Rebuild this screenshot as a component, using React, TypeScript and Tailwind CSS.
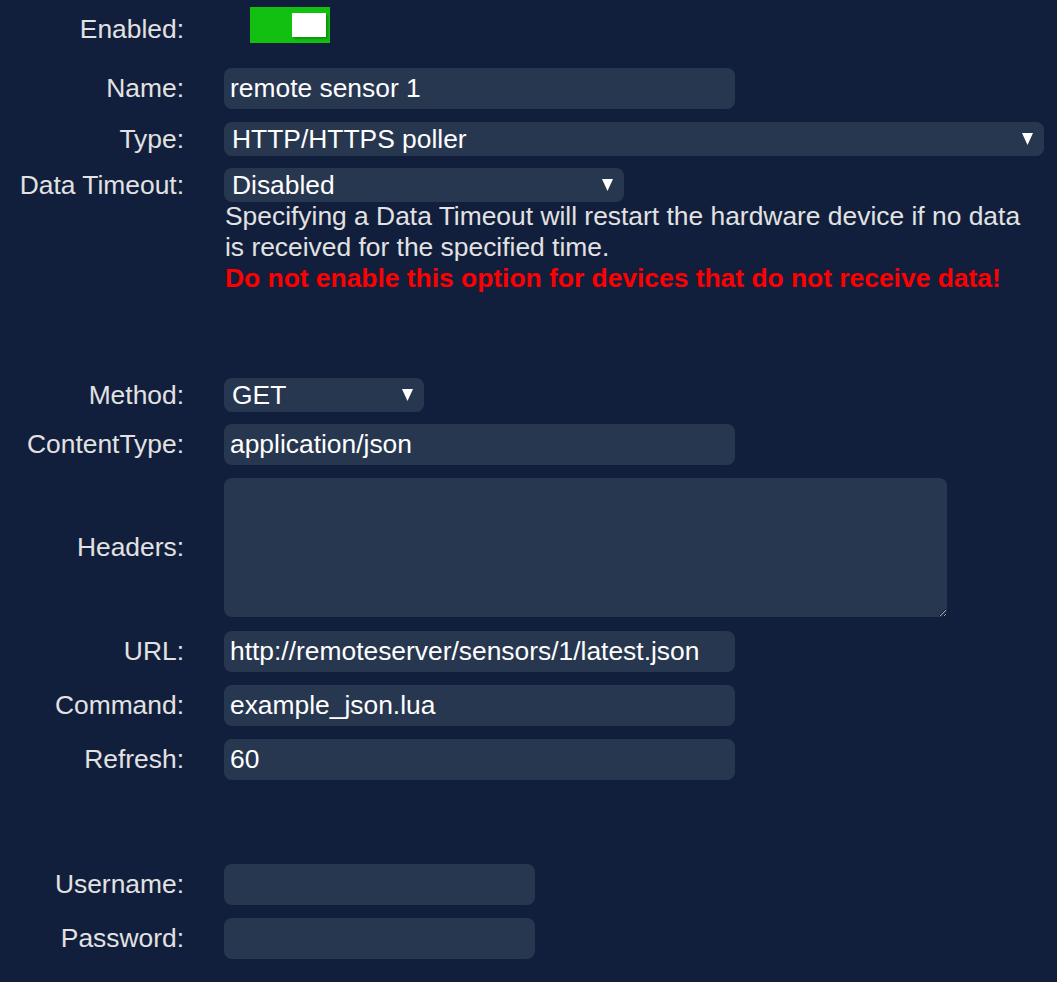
import { useState } from "react";

const font = { fontFamily: '"Liberation Sans", Arial, sans-serif' };

function Label({ children, className = "" }: { children: React.ReactNode; className?: string }) {
  return (
    <label className={`w-[184px] shrink-0 text-right text-[#e2e2e2] ${className}`}>
      {children}
    </label>
  );
}

function TextInput({ value, width }: { value: string; width: string }) {
  return (
    <input
      type="text"
      defaultValue={value}
      className={`${width} h-[41px] rounded-[8px] bg-[#283750] px-[6px] text-white outline-none`}
    />
  );
}

function Select({ value, options, width }: { value: string; options: string[]; width: string }) {
  return (
    <div className={`relative ${width}`}>
      <select
        defaultValue={value}
        className="h-[34px] w-full appearance-none rounded-[8px] bg-[#283750] pl-[8px] pr-8 leading-[34px] text-white outline-none"
      >
        {options.map((o) => (
          <option key={o}>{o}</option>
        ))}
      </select>
      <svg
        className="pointer-events-none absolute right-[11px] top-[11px]"
        width="11"
        height="12"
        viewBox="0 0 11 12"
      >
        <polygon points="0,0 11,0 5.5,12" fill="#ffffff" />
      </svg>
    </div>
  );
}

export default function App() {
  const [enabled, setEnabled] = useState(true);

  return (
    <main className="min-h-screen bg-[#111f3d] text-[26.4px] leading-[normal]" style={font}>
      {/* Enabled */}
      <div className="flex items-center gap-[40px] pt-[7px]">
        <Label className="-mb-[2px] pt-[7px]">Enabled:</Label>
        <button
          onClick={() => setEnabled((p) => !p)}
          className={`ml-[26px] flex h-[36px] w-[80px] items-center ${
            enabled ? "justify-end bg-[#12c012]" : "justify-start bg-[#556070]"
          } px-[4px]`}
        >
          <span className="h-[24px] w-[34px] bg-white shadow-[2px_2px_2px_rgba(0,0,0,0.25)]" />
        </button>
      </div>

      <div className="mt-[25px] flex items-center gap-[40px]">
        <Label>Name:</Label>
        <TextInput value="remote sensor 1" width="w-[511px]" />
      </div>

      <div className="mt-[13px] flex items-center gap-[40px]">
        <Label>Type:</Label>
        <Select value="HTTP/HTTPS poller" options={["HTTP/HTTPS poller", "Serial", "TCP"]} width="w-[820px]" />
      </div>

      {/* Data Timeout */}
      <div className="mt-[12px] flex items-start gap-[40px]">
        <Label className="leading-[34px]">Data Timeout:</Label>
        <div className="w-[820px]">
          <Select value="Disabled" options={["Disabled", "1 minute", "5 minutes"]} width="w-[400px]" />
          <p className="-mt-[1px] pl-[1px] leading-[31px] text-[#e2e2e2]">
            Specifying a Data Timeout will restart the hardware device if no data is received for the specified time.
          </p>
          <p className="pl-[1px] font-bold leading-[31px] text-[#ff0000]">
            Do not enable this option for devices that do not receive data!
          </p>
        </div>
      </div>

      <div className="mt-[84px] flex items-center gap-[40px]">
        <Label>Method:</Label>
        <Select value="GET" options={["GET", "POST", "PUT"]} width="w-[200px]" />
      </div>

      <div className="mt-[12px] flex items-center gap-[40px]">
        <Label>ContentType:</Label>
        <TextInput value="application/json" width="w-[511px]" />
      </div>

      <div className="mt-[13px] flex items-center gap-[40px]">
        <Label>Headers:</Label>
        <textarea className="h-[139px] w-[723px] rounded-[8px] bg-[#283750] px-[6px] text-white outline-none" />
      </div>

      <div className="mt-[14px] flex items-center gap-[40px]">
        <Label>URL:</Label>
        <TextInput value="http://remoteserver/sensors/1/latest.json" width="w-[511px]" />
      </div>

      <div className="mt-[13px] flex items-center gap-[40px]">
        <Label>Command:</Label>
        <TextInput value="example_json.lua" width="w-[511px]" />
      </div>

      <div className="mt-[13px] flex items-center gap-[40px]">
        <Label>Refresh:</Label>
        <TextInput value="60" width="w-[511px]" />
      </div>

      <div className="mt-[84px] flex items-center gap-[40px]">
        <Label>Username:</Label>
        <TextInput value="" width="w-[311px]" />
      </div>

      <div className="mt-[13px] flex items-center gap-[40px] pb-[23px]">
        <Label>Password:</Label>
        <input
          type="password"
          className="h-[41px] w-[311px] rounded-[8px] bg-[#283750] px-[6px] text-white outline-none"
        />
      </div>
    </main>
  );
}
